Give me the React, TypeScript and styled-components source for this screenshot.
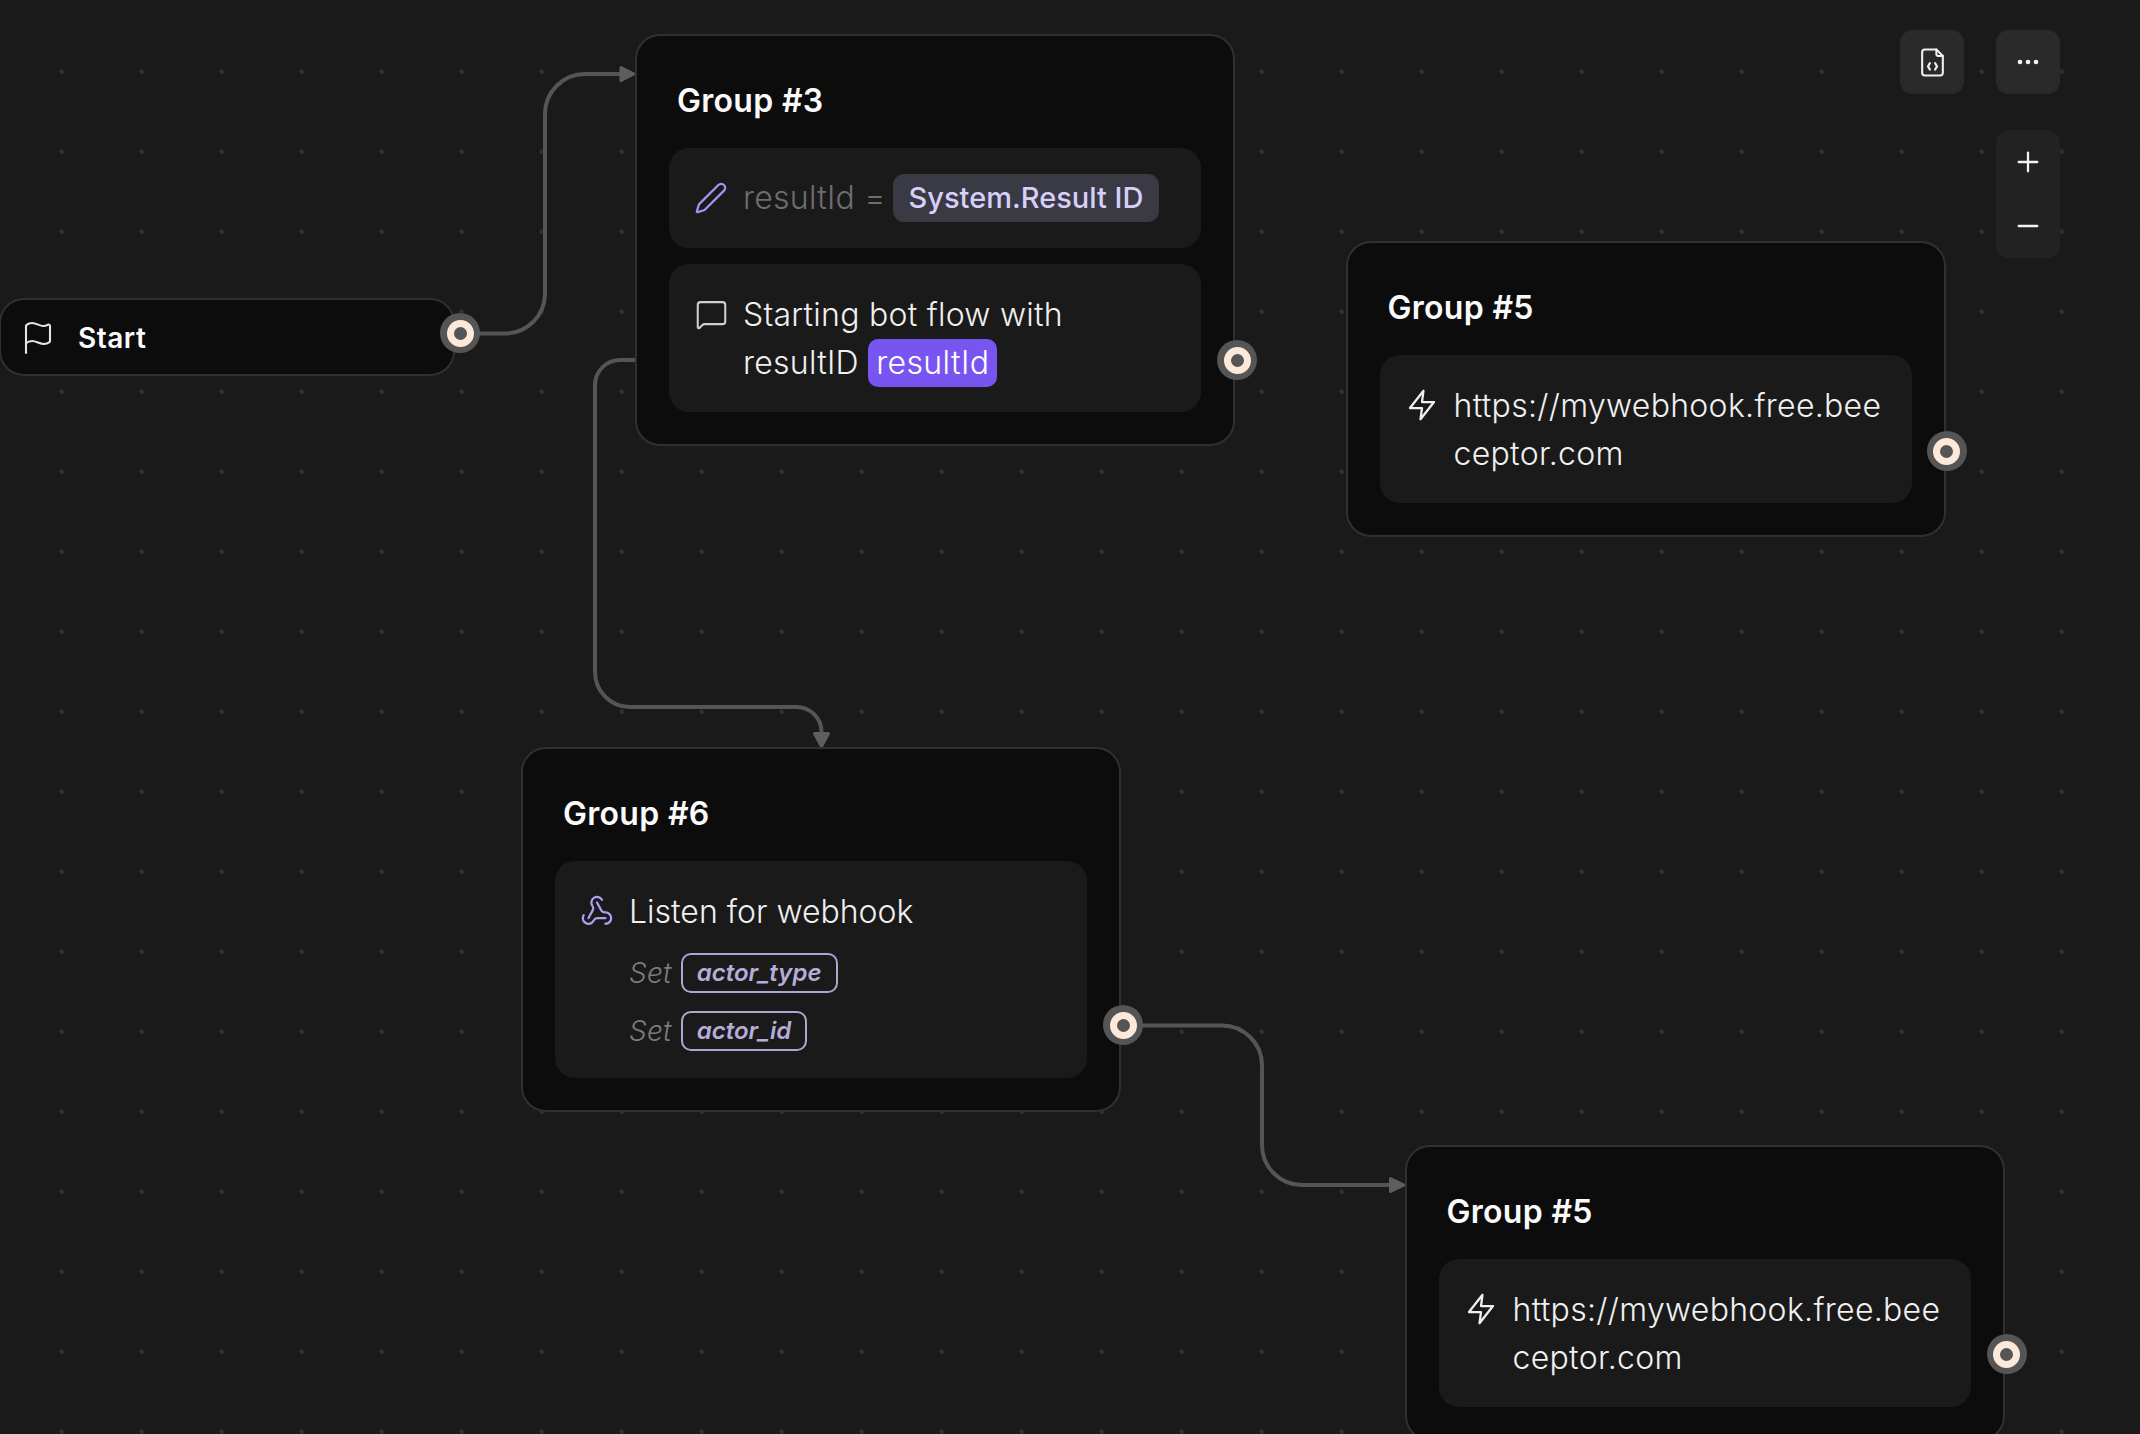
import React from "react";
import styled, { createGlobalStyle } from "styled-components";
import { Flag, MessageSquare, Minus, Pen, Plus, Webhook } from "lucide-react";

const GlobalStyle = createGlobalStyle`
  html, body {
    margin: 0;
    padding: 0;
    background: #1a1a1a;
    overflow: hidden;
  }
  body {
    font-family: "Inter", "Liberation Sans", sans-serif;
    -webkit-font-smoothing: antialiased;
  }
`;

const Canvas = styled.div`
  position: relative;
  width: 2140px;
  height: 1434px;
  overflow: hidden;
  background-color: #1a1a1a;
  background-image: radial-gradient(circle, #30303a 2px, transparent 2.6px);
  background-size: 80px 80px;
  background-position: 21.7px 31.7px;
`;

const Edges = styled.svg`
  position: absolute;
  left: 0;
  top: 0;
  fill: none;
`;

const Node = styled.div<{ $x: number; $y: number }>`
  position: absolute;
  left: ${(p) => p.$x}px;
  top: ${(p) => p.$y}px;
  box-sizing: border-box;
  background: #0c0c0c;
  border: 2px solid #303030;
`;

const Card = styled(Node)`
  width: 600px;
  padding: 0 32px 32px;
  border-radius: 25px;
  display: flex;
  flex-direction: column;
  gap: 16px;
`;

const StartNode = styled(Node)`
  width: 456px;
  height: 78px;
  border-radius: 25px;
  padding: 1px 0 0 19px;
  display: flex;
  align-items: center;
  gap: 22px;
  color: #fafafa;
  font-size: 28px;
  font-weight: 600;
  letter-spacing: 0.5px;
`;

const Handle = styled.div<{ $right: number; $top: number }>`
  position: absolute;
  right: ${(p) => p.$right}px;
  top: ${(p) => p.$top}px;
  width: 40px;
  height: 40px;
  border-radius: 50%;
  background: #555555;
  display: flex;
  align-items: center;
  justify-content: center;
  &::after {
    content: "";
    box-sizing: border-box;
    width: 27px;
    height: 27px;
    border-radius: 50%;
    border: 7.5px solid #fde9da;
    background: #555555;
  }
`;

const Title = styled.div`
  color: #fafafa;
  font-size: 32px;
  font-weight: 600;
  letter-spacing: 0.3px;
  line-height: 46px;
  padding: 42px 0 8px 8px;
`;

const Row = styled.div`
  background: #1a1a1a;
  border-radius: 20px;
  padding: 27px 24px 25px;
  display: flex;
  align-items: flex-start;
  gap: 14px;
  color: #f0f0f0;
  font-size: 32px;
  font-weight: 300;
  letter-spacing: 0.25px;
  line-height: 48px;
`;

const AssignRow = styled(Row)`
  height: 100px;
  box-sizing: border-box;
  padding-top: 0;
  padding-bottom: 0;
  align-items: center;
  white-space: nowrap;
`;

const RowIcon = styled.span<{ $color?: string }>`
  flex: none;
  display: flex;
  align-items: center;
  justify-content: center;
  width: 36px;
  height: 36px;
  margin-top: 5px;
  color: ${(p) => p.$color || "#f0f0f0"};
`;

const AssignIcon = styled(RowIcon)`
  margin-top: 0;
`;

const Muted = styled.span`
  color: #6e6e6e;
`;

const SystemChip = styled.span`
  margin-left: -7px;
  padding: 0 16px;
  height: 48px;
  font-size: 29px;
  line-height: 48px;
  border-radius: 11px;
  background: #3a3a44;
  color: #d6cffa;
  font-weight: 500;
  letter-spacing: 0;
`;

const VariableChip = styled.span`
  display: inline-block;
  padding: 0 8px;
  line-height: 48px;
  border-radius: 10px;
  background: #7855f0;
  color: #ffffff;
  letter-spacing: 0.4px;
`;

const Url = styled.div`
  flex: 1;
  min-width: 0;
  word-break: break-all;
  letter-spacing: 0.3px;
`;

const Stack = styled.div`
  flex: 1;
  display: flex;
  flex-direction: column;
`;

const ListenText = styled.div`
  letter-spacing: 0;
`;

const SetRows = styled.div`
  display: flex;
  flex-direction: column;
  gap: 18px;
  margin-top: 17px;
  margin-bottom: 2px;
`;

const SetRow = styled.div`
  display: flex;
  align-items: center;
  gap: 9px;
  height: 40px;
  color: #7c7c7c;
  font-size: 28px;
  font-style: italic;
  line-height: 40px;
`;

const FieldChip = styled.span`
  box-sizing: border-box;
  height: 40px;
  padding: 0 14px;
  border: 2px solid #aea6cf;
  border-radius: 10px;
  color: #b5add9;
  font-size: 24px;
  font-weight: 600;
  letter-spacing: 0;
  line-height: 35px;
`;

const Toolbar = styled.div`
  position: absolute;
  left: 1900px;
  top: 30px;
  display: flex;
  gap: 32px;
`;

const ToolButton = styled.div`
  width: 64px;
  height: 64px;
  border-radius: 13px;
  background: #2a2a2a;
  color: #f0f0f0;
  display: flex;
  align-items: center;
  justify-content: center;
`;

const ZoomControls = styled.div`
  position: absolute;
  left: 1996px;
  top: 130px;
  width: 64px;
  height: 128px;
  border-radius: 13px;
  background: #222222;
  color: #f4f4f4;
  display: flex;
  flex-direction: column;
`;

const ZoomButton = styled.div`
  flex: 1;
  display: flex;
  align-items: center;
  justify-content: center;
`;

const FileBracesIcon = () => (
  <svg width="31" height="31" viewBox="0 0 24 24" fill="none" stroke="currentColor" strokeWidth="1.6" strokeLinecap="round" strokeLinejoin="round">
    <path d="M6 22a2 2 0 0 1-2-2V4a2 2 0 0 1 2-2h9l5 5v13a2 2 0 0 1-2 2z" />
    <path d="M15 2v3.5a1.5 1.5 0 0 0 1.5 1.5H20" />
    <path d="M10 12.5 8.5 15l1.5 2.5" />
    <path d="M14 12.5l1.5 2.5-1.5 2.5" />
  </svg>
);

const EllipsisIcon = () => (
  <svg width="24" height="24" viewBox="0 0 24 24" fill="currentColor">
    <circle cx="4" cy="12" r="2.3" />
    <circle cx="12" cy="12" r="2.3" />
    <circle cx="20" cy="12" r="2.3" />
  </svg>
);

const ZapIcon = () => (
  <svg width="36" height="36" viewBox="0 0 24 24" fill="none" stroke="currentColor" strokeWidth="1.5" strokeLinecap="round" strokeLinejoin="round">
    <polygon points="13 2.5 4 14 12 14 11 21.5 20 10 12 10 13 2.5" />
  </svg>
);

const iconProps = { size: 34, strokeWidth: 1.6 };

const App = () => {
  return (
    <Canvas>
      <GlobalStyle />
      <Edges width="2140" height="1434" viewBox="0 0 2140 1434">
        <g stroke="#555555" strokeWidth="4">
          <path d="M478 333.5 H505 A40 40 0 0 0 545 293.5 V114 A40 40 0 0 1 585 74 H622" />
          <path d="M640 360 H620 A25 25 0 0 0 595 385 V672 A35 35 0 0 0 630 707 H796 A25 25 0 0 1 821.5 732 V736" />
          <path d="M1140 1025.5 H1222 A40 40 0 0 1 1262 1065 V1145 A40 40 0 0 0 1302 1185 H1392" />
        </g>
        <g fill="#5e5e5e" stroke="#5e5e5e" strokeWidth="3" strokeLinejoin="round">
          <path d="M621 67.5 L634 74 L621 80.5 Z" />
          <path d="M814.5 733.5 L828.5 733.5 L821.5 746.5 Z" />
          <path d="M1390.5 1178.5 L1404 1185 L1390.5 1191.5 Z" />
        </g>
      </Edges>

      <StartNode $x={-1} $y={298}>
        <Flag size={36} strokeWidth={1.4} color="#e4e4e4" />
        Start
        <Handle $right={-27} $top={13} />
      </StartNode>

      <Card $x={635} $y={34}>
        <Title>Group #3</Title>
        <AssignRow>
          <AssignIcon $color="#a594f3">
            <Pen {...iconProps} />
          </AssignIcon>
          <Muted>resultId =</Muted>
          <SystemChip>System.Result ID</SystemChip>
        </AssignRow>
        <Row>
          <RowIcon $color="#cfcfcf">
            <MessageSquare size={33} strokeWidth={1.5} />
          </RowIcon>
          <div>
            Starting bot flow with
            <br />
            resultID <VariableChip>resultId</VariableChip>
          </div>
        </Row>
        <Handle $right={-24} $top={304} />
      </Card>

      <Card $x={1345.5} $y={241}>
        <Title>Group #5</Title>
        <Row>
          <RowIcon>
            <ZapIcon />
          </RowIcon>
          <Url>https://mywebhook.free.beeceptor.com</Url>
        </Row>
        <Handle $right={-23} $top={188} />
      </Card>

      <Card $x={521} $y={747}>
        <Title>Group #6</Title>
        <Row>
          <RowIcon $color="#a8a0f0">
            <Webhook {...iconProps} />
          </RowIcon>
          <Stack>
            <ListenText>Listen for webhook</ListenText>
            <SetRows>
              <SetRow>
                Set <FieldChip>actor_type</FieldChip>
              </SetRow>
              <SetRow>
                Set <FieldChip>actor_id</FieldChip>
              </SetRow>
            </SetRows>
          </Stack>
        </Row>
        <Handle $right={-24} $top={256} />
      </Card>

      <Card $x={1404.5} $y={1145}>
        <Title>Group #5</Title>
        <Row>
          <RowIcon>
            <ZapIcon />
          </RowIcon>
          <Url>https://mywebhook.free.beeceptor.com</Url>
        </Row>
        <Handle $right={-24} $top={187} />
      </Card>

      <Toolbar>
        <ToolButton>
          <FileBracesIcon />
        </ToolButton>
        <ToolButton>
          <EllipsisIcon />
        </ToolButton>
      </Toolbar>
      <ZoomControls>
        <ZoomButton>
          <Plus size={32} strokeWidth={1.7} />
        </ZoomButton>
        <ZoomButton>
          <Minus size={32} strokeWidth={1.7} />
        </ZoomButton>
      </ZoomControls>
    </Canvas>
  );
};

export default App;
